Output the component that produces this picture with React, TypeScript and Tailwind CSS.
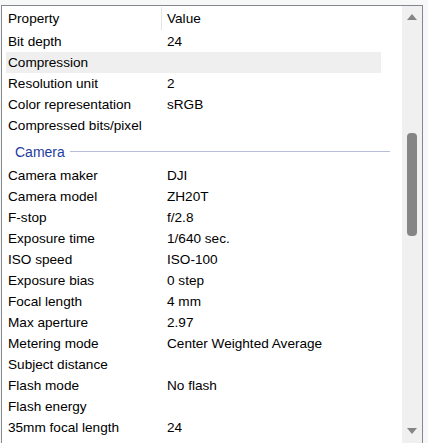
import React from "react";

type Row = { k: string; v: string; hl?: boolean } | { group: string };

const rows: Row[] = [
  { k: "Bit depth", v: "24" },
  { k: "Compression", v: "", hl: true },
  { k: "Resolution unit", v: "2" },
  { k: "Color representation", v: "sRGB" },
  { k: "Compressed bits/pixel", v: "" },
  { group: "Camera" },
  { k: "Camera maker", v: "DJI" },
  { k: "Camera model", v: "ZH20T" },
  { k: "F-stop", v: "f/2.8" },
  { k: "Exposure time", v: "1/640 sec." },
  { k: "ISO speed", v: "ISO-100" },
  { k: "Exposure bias", v: "0 step" },
  { k: "Focal length", v: "4 mm" },
  { k: "Max aperture", v: "2.97" },
  { k: "Metering mode", v: "Center Weighted Average" },
  { k: "Subject distance", v: "" },
  { k: "Flash mode", v: "No flash" },
  { k: "Flash energy", v: "" },
  { k: "35mm focal length", v: "24" },
];

export default function App() {
  return (
    <div
      className="w-[428px] h-[443px] bg-[#f7f7f7] pt-[5px] pl-[1px] overflow-hidden text-black text-[13.6px]"
      style={{ fontFamily: '"Liberation Sans", Arial, sans-serif' }}
    >
      <div className="w-[422px] h-[438px] border border-b-0 border-[#828790] bg-white flex">
        <div className="flex-1 flex flex-col pl-[4px] overflow-hidden">
          <div className="flex h-[25px] w-[375px] items-center">
            <div className="w-[155px] pl-[2px] leading-[25px]">Property</div>
            <div className="w-px h-[23px] bg-[#e5e5e5] self-start mt-px" />
            <div className="pl-[5px] leading-[25px]">Value</div>
          </div>
          {rows.map((r, i) =>
            "group" in r ? (
              <div key={i} className="flex items-center h-[29px] w-[384px] pl-[9px] pt-[3px]">
                <span className="text-[#1e3ca0] text-[14px] leading-[26px]">{r.group}</span>
                <div className="flex-1 h-px bg-[#b6bedb] ml-[5px] mt-[-1px]" />
              </div>
            ) : (
              <div
                key={i}
                className={`flex h-[21px] w-[375px] leading-[21px] ${r.hl ? "bg-[#efefef]" : ""}`}
              >
                <div className="w-[161px] pl-[2px] whitespace-nowrap">{r.k}</div>
                <div className="whitespace-nowrap">{r.v}</div>
              </div>
            )
          )}
        </div>
        <div className="w-[20px] bg-[#f0f0f0] flex flex-col items-center pt-[8px]">
          <svg width="10" height="6" viewBox="0 0 10 6">
            <polygon points="5,0 10,6 0,6" fill="#858585" />
          </svg>
          <div className="mt-[113px] w-[10px] h-[103px] rounded-[4px] bg-[#858585]" />
          <svg className="mt-[192px]" width="10" height="6" viewBox="0 0 10 6">
            <polygon points="0,0 10,0 5,6" fill="#858585" />
          </svg>
        </div>
      </div>
    </div>
  );
}
